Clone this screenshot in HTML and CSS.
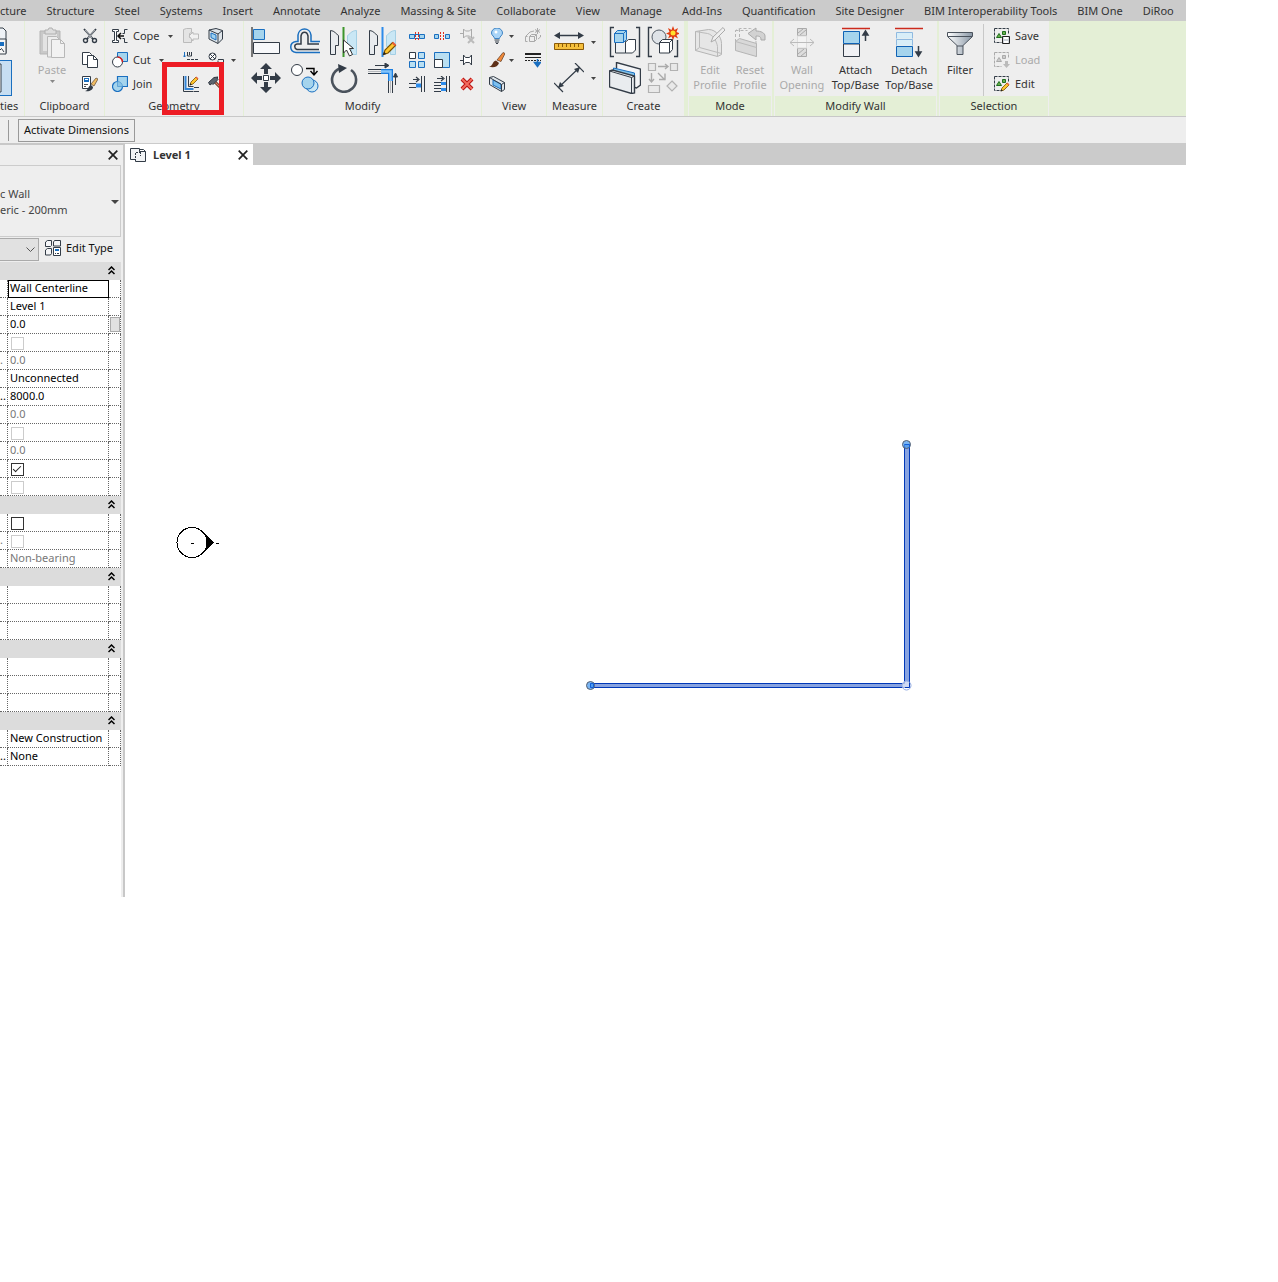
FILE: index.html
```html
<!DOCTYPE html>
<html lang="en">
<head>
    <meta charset="UTF-8">
    <meta name="viewport" content="width=device-width, initial-scale=1.0">
    <title>Level 1 - Modify Walls</title>
    <link rel="stylesheet" href="styles.css">
</head>
<body>
    <!-- Shared glyphs -->
    <svg class="defs" width="0" height="0">
        <symbol id="arrow" viewBox="0 0 5 3"><path d="M0 0h5L2.500 3z" fill="#444"/></symbol>
        <symbol id="collapse" viewBox="0 0 7 9"><path d="M.5 4l3-3 3 3M.5 8l3-3 3 3" fill="none" stroke="#000" stroke-width="1.500"/></symbol>
        <symbol id="close" viewBox="0 0 10 10"><path d="M.7.7l8.600 8.600M9.300.7L.7 9.300" stroke="#222" stroke-width="1.700"/></symbol>
        <symbol id="pencil" viewBox="0 0 10 10"><path d="M1 9l1-3 5-5 2 2-5 5z" fill="#ffc52e" stroke="#7a5200" stroke-width=".8"/><path d="M6.500 1.500L7.500.5l2 2-1 1z" fill="#e8603c"/><path d="M.6 9.400l.8-2.200 1.400 1.400z" fill="#222"/></symbol>
        <symbol id="picked" viewBox="0 0 16 16"><path d="M.5.5h14v5M.5.5v14h7" fill="none" stroke="#333c47" stroke-dasharray="3 1"/><path d="M2.500 9.500l2.500-4 2.500 4z" fill="#6ab04c" stroke="#1f6f1f"/><path d="M8.500 3.500h3v3h-3z" fill="#6ab04c" stroke="#1f6f1f"/></symbol>
    </svg>

    <div class="app">
        <nav class="tabs">
            <a href="#">cture</a>
            <a href="#">Structure</a>
            <a href="#">Steel</a>
            <a href="#">Systems</a>
            <a href="#">Insert</a>
            <a href="#">Annotate</a>
            <a href="#">Analyze</a>
            <a href="#">Massing &amp; Site</a>
            <a href="#">Collaborate</a>
            <a href="#">View</a>
            <a href="#">Manage</a>
            <a href="#">Add-Ins</a>
            <a href="#">Quantification</a>
            <a href="#">Site Designer</a>
            <a href="#">BIM Interoperability Tools</a>
            <a href="#">BIM One</a>
            <a href="#">DiRoo</a>
        </nav>

        <div class="ribbon">
            <section class="panel panel-properties">
                <div class="panel-body col">
                    <button class="prop-btn" aria-label="Type properties"><svg width="8" height="30" viewBox="0 0 8 30"><path d="M-2 1h5l3 3v22" fill="#eef2f6" stroke="#333c47"/><path d="M-1 12h7v15h-7z" fill="#f7f7f7" stroke="#333c47"/><path d="M0 15h4v4H0z" fill="#1a6fc0"/><path d="M0 23l1.500-1.500L4 25" fill="none" stroke="#333c47"/></svg></button>
                    <button class="prop-btn selected" aria-label="Properties"><svg width="4" height="30" viewBox="0 0 4 30"><path d="M-2 1h3v28h-3" fill="#fff" stroke="#333c47"/></svg></button>
                </div>
                <h2>ties</h2>
            </section>

            <section class="panel panel-clipboard">
                <div class="panel-body">
                    <button class="big-btn" disabled>
                        <svg width="30" height="32" viewBox="0 0 30 32"><path d="M3 4h20v23H3z" fill="#c9c9c9" stroke="#b5b5b5"/><path d="M6 7h14v17H6z" fill="#e3e3e3"/><path d="M8 3h3l1-2h3l1 2h3v4H8z" fill="#ddd" stroke="#b0b0b0"/><path d="M10.500 9.500h9l4 4V30h-13z" fill="#ededed" stroke="#b8b8b8"/><path d="M14.500 12.500h9l4 4V30.500h-13z" fill="#f2f2f2" stroke="#b8b8b8"/><path d="M23.500 12.500v4h4" fill="none" stroke="#b8b8b8"/></svg>
                        <span>Paste</span>
                        <svg class="drop" width="5" height="3"><use href="#arrow"/></svg>
                    </button>
                    <div class="col">
                        <button class="icon-btn" aria-label="Cut to clipboard"><svg width="16" height="16" viewBox="0 0 16 16"><path d="M2 1l9 10M14 1L5 11" stroke="#333c47" stroke-width="1.800"/><path d="M3 2l7 8M13 2l-7 8" stroke="#fff" stroke-width=".6"/><circle cx="3.500" cy="12.500" r="2" fill="none" stroke="#333c47" stroke-width="1.400"/><circle cx="12.500" cy="12.500" r="2" fill="none" stroke="#333c47" stroke-width="1.400"/></svg></button>
                        <button class="icon-btn" aria-label="Copy to clipboard"><svg width="16" height="16" viewBox="0 0 16 16"><path d="M.5 12.500V.5h7l2 2v10z" fill="#fff" stroke="#333c47"/><path d="M5.500 15.500v-12h6l4 4v8z" fill="#fff" stroke="#333c47"/><path d="M11.500 3.500v4h4" fill="none" stroke="#333c47"/></svg></button>
                        <button class="icon-btn" aria-label="Match type"><svg width="16" height="16" viewBox="0 0 16 16"><path d="M.5.5h8v12h-8z" fill="#fff" stroke="#333c47"/><path d="M2 2h5v4H2z" fill="#1a6fc0"/><path d="M3 3h3v1H3z" fill="#fff"/><path d="M2 8.500h4M2 10.500h2" stroke="#555"/><path d="M9 8l5-6 2 1-4 7z" fill="#f2bd63" stroke="#5a4630" stroke-width=".7"/><path d="M3 15c3 0 3-5 6-6l2 2c0 3-4 5-8 4z" fill="#333c47"/></svg></button>
                    </div>
                </div>
                <h2>Clipboard</h2>
            </section>

            <section class="panel panel-geometry">
                <div class="panel-body">
                    <div class="col labelled">
                        <button class="text-btn"><svg width="16" height="16" viewBox="0 0 16 16"><path d="M.5 1.500h6v2h-2v9h2v2h-6v-2h2v-9h-2z" fill="#fff" stroke="#333c47"/><path d="M15.500 1.500h-3v4h-2M15.500 14.500h-3v-4h-2" fill="none" stroke="#333c47"/><path d="M6 8h6M9 5L6 8l3 3" fill="none" stroke="#111" stroke-width="1.500"/></svg><span>Cope</span><svg class="more" width="5" height="3"><use href="#arrow"/></svg></button>
                        <button class="text-btn"><svg width="16" height="16" viewBox="0 0 16 16"><path d="M5.500.5h10v9h-10z" fill="#a5d4ed" stroke="#1a6fc0"/><circle cx="5.500" cy="10" r="5" fill="#fff" stroke="#333c47"/><path d="M5.500 5a5 5 0 0 1 5 5" fill="none" stroke="#d91f1f" stroke-width="1.500"/></svg><span>Cut</span><svg class="more" width="5" height="3"><use href="#arrow"/></svg></button>
                        <button class="text-btn"><svg width="16" height="16" viewBox="0 0 16 16"><path d="M5.500 5.500V.5h10v10h-5A5 5 0 1 1 5.500 5.500z" fill="#a5d4ed" stroke="#1a6fc0" stroke-width="1.200"/><path d="M5.500 5.500a5 5 0 0 1 5 5h-5z" fill="#8bc4e6" stroke="#4a95d0" stroke-width=".7"/></svg><span>Join</span></button>
                    </div>
                    <div class="col">
                        <button class="icon-btn" aria-label="Join roofs" disabled><svg width="16" height="16" viewBox="0 0 16 16"><path d="M.5 1.500l3-1h5v4l-2 1v4h2v5h-8z" fill="#e4e4e4" stroke="#bbb"/><path d="M6 8l4-4v2h5.500v5H10v2z" fill="#f1f1f1" stroke="#bbb"/></svg></button>
                        <button class="icon-btn" aria-label="Beam joins"><svg width="16" height="16" viewBox="0 0 16 16"><path d="M1.500 0v5M0 3.500L1.500 5 3 3.500" stroke="#1a6fc0" fill="none"/><path d="M4.500 0v4h4v-4M6.500 0v3" stroke="#333c47" fill="none"/><path d="M4 7.500h12M4 10.500h12" stroke="#333c47" stroke-dasharray="3 1"/></svg></button>
                        <button class="icon-btn" aria-label="Wall joins"><svg width="16" height="16" viewBox="0 0 16 16"><path d="M.5 0v15.500h10" stroke="#333c47" fill="none"/><path d="M2.500 0v13h8" stroke="#3284d6" stroke-width="2" fill="none"/><path d="M5.500 0v10.500h5M11 11.500h5M11 15.500h5" stroke="#333c47" fill="none"/><use href="#pencil" x="6" y="0" width="10" height="10"/></svg></button>
                    </div>
                    <div class="col tools">
                        <button class="icon-btn" aria-label="Split face"><svg width="16" height="16" viewBox="0 0 16 16"><path d="M1 2l7-1.500 6.500 2V11L10 15.500 1 11z" fill="#dfe5ea" stroke="#333c47"/><path d="M10 15.500V6L1 2M10 6l4.500-3.500" fill="none" stroke="#333c47"/><path d="M3 5l5 2v5L3 9.500z" fill="#9fd2f0" stroke="#1a6fc0"/></svg></button>
                        <button class="icon-btn wide" aria-label="Paint"><svg width="16" height="16" viewBox="0 0 16 16"><circle cx="4.500" cy="4.500" r="3.500" fill="#fff" stroke="#333c47"/><path d="M2 2l5 5M7 2L2 7" stroke="#333c47"/><path d="M2 11.500h13.500v-4H10M2 14.500h8v-6" fill="none" stroke="#333c47"/></svg><svg width="5" height="3"><use href="#arrow"/></svg></button>
                        <button class="icon-btn" aria-label="Demolish"><svg width="16" height="16" viewBox="0 0 16 16"><path d="M7 6l8 8" stroke="#5a2a1c" stroke-width="3"/><path d="M7 6l8 8" stroke="#d0856a" stroke-width="1.200"/><path d="M.5 6.500L6 1.500l4-.5-1 1 1 1.500L5 8.500 4 7.500 2 9z" fill="#5b646e" stroke="#2e3640"/></svg></button>
                    </div>
                </div>
                <h2>Geometry</h2>
            </section>

            <section class="panel panel-modify">
                <div class="panel-body">
                    <div class="large-grid">
                        <button aria-label="Align"><svg width="30" height="30" viewBox="0 0 30 30"><path d="M1 0v30" stroke="#000"/><path d="M2.500 2.500h11v10h-11z" fill="#a5d4ed" stroke="#1a6fc0"/><path d="M2.500 15.500h26v11h-26z" fill="#f7f8fa" stroke="#333c47"/></svg></button>
                        <button aria-label="Offset"><svg width="30" height="30" viewBox="0 0 30 30"><g fill="none"><path d="M30 25.500H6c-7-1-7-10 0-11h2V8c1-8 12-8 13 0v6.500h9" stroke="#1a6fc0" stroke-width="1.500"/><path d="M29 22.500H7c-3-1-3-5 0-5.500h4V9c1-5 6-5 7 0v8h11" stroke="#333c47" stroke-width="1.500"/></g></svg></button>
                        <button aria-label="Mirror - pick axis"><svg width="30" height="30" viewBox="0 0 30 30"><path d="M1.500 3.500c4 0 6 4 8 5v10h-3v9h-5z" fill="#e8ebee" stroke="#333c47"/><path d="M27.500 3.500c-5 0-7 4-9 5v11h4v8h5z" fill="#c9e7f5" stroke="#a3cfe4"/><path d="M14.500 0v30" stroke="#3d962b" stroke-width="2"/><path d="M14.500 13v13l3-3 3 6 3-1.500-3-6h4z" fill="#fff" stroke="#333"/></svg></button>
                        <button aria-label="Mirror - draw axis"><svg width="30" height="30" viewBox="0 0 30 30"><path d="M1.500 3.500c4 0 6 4 8 5v10h-3v9h-5z" fill="#e8ebee" stroke="#333c47"/><path d="M27.500 3.500c-5 0-7 4-9 5v11h4v8h5z" fill="#c9e7f5" stroke="#a3cfe4"/><path d="M14.500 0v30" stroke="#2c8bea" stroke-width="2"/><use href="#pencil" x="14" y="14" width="15" height="15"/></svg></button>
                        <button aria-label="Move"><svg width="30" height="30" viewBox="0 0 30 30"><path d="M15 0l6 6h-4v5h-4V6H9zM15 30l6-6h-4v-5h-4v5H9zM0 15l6-6v4h5v4H6v4zM30 15l-6-6v4h-5v4h5v4z" fill="#333c47"/><path d="M12.500 12.500h5v5h-5z" fill="#fff" stroke="#333c47"/></svg></button>
                        <button aria-label="Copy"><svg width="30" height="30" viewBox="0 0 30 30"><circle cx="7" cy="7" r="5.500" fill="#fff" stroke="#333c47"/><path d="M16 5.500h8V11M20.500 8l3.500 4 3.500-4" fill="none" stroke="#000" stroke-width="1.400"/><circle cx="22" cy="23" r="6" fill="#c9e7f5" stroke="#1a6fc0"/><circle cx="18" cy="20" r="6" fill="#a5d4ed" stroke="#1a6fc0"/></svg></button>
                        <button aria-label="Rotate"><svg width="30" height="30" viewBox="0 0 30 30"><path d="M11 5.500A12 12 0 1 0 22 7" fill="none" stroke="#4a525c" stroke-width="2.600"/><path d="M9 1l9 4-8 5z" fill="#333c47"/></svg></button>
                        <button aria-label="Trim to corner"><svg width="30" height="30" viewBox="0 0 30 30"><path d="M7 2.500h12M17 0l4 2.500L17 5z" fill="#333c47" stroke="#333c47"/><path d="M0 6.500h14M0 10.500h14M20.500 17v13M24.500 17v13" stroke="#333c47"/><path d="M0 8.500h14M22.500 17v13" stroke="#b5b8bc"/><path d="M13 8.500h9.500V18" fill="none" stroke="#1a7de0" stroke-width="5"/><path d="M13 8.500h9.500V18" fill="none" stroke="#83c3fa" stroke-width="2.500"/><path d="M27.500 22V13M25.500 14l2-4 2 4z" fill="#333c47" stroke="#333c47"/></svg></button>
                    </div>
                    <div class="small-grid">
                        <button class="icon-btn" aria-label="Split element"><svg width="16" height="16" viewBox="0 0 16 16"><path d="M.5 6.500h5v4h-5zM10.500 6.500h5v4h-5z" fill="#a5d4ed" stroke="#1a6fc0"/><path d="M6 6.500h4M6 10.500h4" stroke="#1a6fc0"/><path d="M6.500 4v9M9.500 4v9" stroke="#e03020" stroke-dasharray="2 1"/></svg></button>
                        <button class="icon-btn" aria-label="Split with gap"><svg width="16" height="16" viewBox="0 0 16 16"><path d="M.5 6.500h4v4h-4zM11.500 6.500h4v4h-4z" fill="#a5d4ed" stroke="#1a6fc0"/><path d="M6.500 4v9M9.500 4v9" stroke="#e03020" stroke-dasharray="2 1"/></svg></button>
                        <button class="icon-btn" aria-label="Unpin" disabled><svg width="16" height="16" viewBox="0 0 16 16"><path d="M1 5.500h4M4.500 1v9l2-2h4l2 2V1l-2 2h-4z" fill="none" stroke="#aaa"/><path d="M9 9l6 6M15 9l-6 6" stroke="#bbb" stroke-width="2"/></svg></button>
                        <button class="icon-btn" aria-label="Array"><svg width="16" height="16" viewBox="0 0 16 16"><path d="M.5.5h6v6h-6z" fill="#fff" stroke="#333c47"/><path d="M9.500.5h6v6h-6zM.5 9.500h6v6h-6zM9.500 9.500h6v6h-6z" fill="#b9dff2" stroke="#1a6fc0"/></svg></button>
                        <button class="icon-btn" aria-label="Scale"><svg width="16" height="16" viewBox="0 0 16 16"><path d="M.5.5h15v15h-15z" fill="#b9dff2" stroke="#1a6fc0"/><path d="M.5 7.500h8v8h-8z" fill="#fff" stroke="#333c47"/></svg></button>
                        <button class="icon-btn" aria-label="Pin"><svg width="16" height="16" viewBox="0 0 16 16"><path d="M1 8.500h4M4.500 3v10l2-2.500h4l2 2.500V3l-2 2.500h-4z" fill="#fff" stroke="#333c47"/></svg></button>
                        <button class="icon-btn" aria-label="Trim single element"><svg width="16" height="16" viewBox="0 0 16 16"><path d="M4 3.500h5M7 1l3 2.500L7 6" fill="none" stroke="#333c47" stroke-width="1.200"/><path d="M0 7.500h7M0 11.500h7M12.500 0v16M15.500 0v16" stroke="#333c47"/><path d="M7 9.500h5" stroke="#2c8bea" stroke-width="4"/></svg></button>
                        <button class="icon-btn" aria-label="Trim multiple elements"><svg width="16" height="16" viewBox="0 0 16 16"><path d="M3 2.500h6M7 0l3 2.500L7 5" fill="none" stroke="#333c47" stroke-width="1.200"/><path d="M0 6.500h7M0 9.500h7M0 12.500h7M0 15.500h7M12.500 0v16M15.500 0v16" stroke="#333c47"/><path d="M7 7.500h5M7 13.500h5" stroke="#2c8bea" stroke-width="3"/></svg></button>
                        <button class="icon-btn" aria-label="Delete"><svg width="16" height="16" viewBox="0 0 16 16"><path d="M3 3l10 10M13 3L3 13" stroke="#b81010" stroke-width="4"/><path d="M3 3l10 10M13 3L3 13" stroke="#f36b5e" stroke-width="2"/></svg></button>
                    </div>
                </div>
                <h2>Modify</h2>
            </section>

            <section class="panel panel-view">
                <div class="panel-body">
                    <div class="col tools">
                        <button class="icon-btn wide" aria-label="Hide in view"><svg width="16" height="16" viewBox="0 0 16 16"><path d="M5.500 10.500c0-2-3-3-3-5.500a5.500 5 0 0 1 11 0c0 2.500-3 3.500-3 5.500z" fill="#a9d4f7" stroke="#3d83c4"/><path d="M5.500 12h5M6 14h4M7 15.500h2" stroke="#333c47" stroke-width="1.200"/><circle cx="7" cy="4" r="1.500" fill="#fff"/></svg><svg width="5" height="3"><use href="#arrow"/></svg></button>
                        <button class="icon-btn wide" aria-label="Override graphics"><svg width="16" height="16" viewBox="0 0 16 16"><path d="M8 8l6-7.500 2 1-4 8z" fill="#f0893a" stroke="#5a3620" stroke-width=".7"/><path d="M0 14.500c4 0 3-5 7-6l3 2.500c-1 4-6 5-10 3.500z" fill="#5d3018"/></svg><svg width="5" height="3"><use href="#arrow"/></svg></button>
                        <button class="icon-btn" aria-label="Selection box"><svg width="16" height="16" viewBox="0 0 16 16"><path d="M.5 1.500l4-1 11 6v7l-3 2-12-7z" fill="#dfe5ea" stroke="#333c47"/><path d="M4 4l8 4v5L4 9z" fill="#7dc0ef" stroke="#1a6fc0"/><path d="M.5 1.500l12 7 3-2M12.500 8.500v7" fill="none" stroke="#333c47"/></svg></button>
                    </div>
                    <div class="col">
                        <button class="icon-btn" aria-label="Displace elements" disabled><svg width="16" height="16" viewBox="0 0 16 16"><path d="M4.500 8.500l2-2h5v5l-2 2h-5zM4.500 8.500h5v5M9.500 8.500l2-2M2.500 13.500h-2v-5h2M1 8l4-4 4-1M13 11l2.500-2V7" fill="none" stroke="#aaa"/><path d="M12.500 0v6M10 1.500l5 3M15 1.500l-5 3" stroke="#aaa"/></svg></button>
                        <button class="icon-btn" aria-label="Linework"><svg width="16" height="16" viewBox="0 0 16 16"><path d="M0 2h16" stroke="#222" stroke-width="2"/><path d="M0 5.500h16" stroke="#222"/><path d="M0 8.500h16" stroke="#222" stroke-dasharray="2 1"/><path d="M12.500 7v6M9.500 10.500l3 4 3-4z" fill="#1a6fc0" stroke="#1a6fc0" stroke-width="1.500"/></svg></button>
                    </div>
                </div>
                <h2>View</h2>
            </section>

            <section class="panel panel-measure">
                <div class="panel-body col">
                    <button class="measure-btn" aria-label="Measure between references"><svg width="30" height="30" viewBox="0 0 30 30"><path d="M4 8.500h22" stroke="#333c47" stroke-width="1.500"/><path d="M0 8.500L6 5v7zM30 8.500L24 5v7z" fill="#333c47"/><path d="M.5 16.500h29v6H.5z" fill="#f5bf3c" stroke="#8a5a08"/><path d="M4.500 17v3m4-3v3m4-3v3m4-3v3m4-3v3m4-3v3" stroke="#8a5a08"/></svg><svg width="5" height="3"><use href="#arrow"/></svg></button>
                    <button class="measure-btn" aria-label="Aligned dimension"><svg width="30" height="30" viewBox="0 0 30 30"><path d="M4 25L26 4M0 20l9 9M21 0l9 9" stroke="#333c47" stroke-width="1.200"/><path d="M4 25l2-6 4 4zM26 4l-2 6-4-4z" fill="#333c47"/></svg><svg width="5" height="3"><use href="#arrow"/></svg></button>
                </div>
                <h2>Measure</h2>
            </section>

            <section class="panel panel-create">
                <div class="panel-body">
                    <div class="large-grid two">
                        <button aria-label="Create assembly"><svg width="32" height="32" viewBox="0 0 32 32"><path d="M5 1.500H1.500v29H5M27 1.500h3.500v29H27" fill="none" stroke="#333c47" stroke-width="1.400"/><path d="M16.500 16l3-2.500h7V24l-3 3h-7z" fill="#fff" stroke="#333c47"/><path d="M6.500 15.500h10V27h-10z" fill="#eef0f2" stroke="#333c47"/><path d="M5.500 7.500l3-3h9v9l-3 3h-9z" fill="#a5d4ed" stroke="#1a6fc0"/><path d="M5.500 7.500h9v9M14.500 7.500l3-3" fill="none" stroke="#1a6fc0"/></svg></button>
                        <button aria-label="Create group"><svg width="32" height="32" viewBox="0 0 32 32"><path d="M5 1.500H1.500v29H5M27 30.500h3.500V14" fill="none" stroke="#333c47" stroke-width="1.400"/><circle cx="12" cy="11" r="7" fill="#dfe3e8" stroke="#555e69"/><path d="M12.500 16.500l3-3h10v10l-3 3.500h-10z" fill="#fff" stroke="#333c47"/><path d="M12.500 16.500h10V27M22.500 16.500l3-3" fill="none" stroke="#333c47"/><path d="M26 0l1.500 4L31 2l-1.500 4L33 7.500 29.500 9l1.500 3.500-3.500-2L26 14l-1.500-3.500-3.500 2L22.500 9 19 7.500 22.500 6 21 2l3.500 2z" fill="#e23c10"/><circle cx="26" cy="7" r="2.500" fill="#ffe12d"/></svg></button>
                        <button aria-label="Create parts"><svg width="32" height="32" viewBox="0 0 32 32"><path d="M7.500.5L31.500 7v16l-4 3L7.500 20z" fill="#f4f5f7" stroke="#333c47" stroke-width="1.400"/><path d="M4.500 6l21 5v17l-21-6z" fill="#83c3ea" stroke="#1a6fc0"/><path d="M.5 9l3-1 22 6v17l-3 .5-22-6.500z" fill="#e9ecef" stroke="#333c47" stroke-width="1.400"/><path d="M.5 9l22 6.500v16M22.500 15.500l3-1.500" fill="none" stroke="#333c47"/></svg></button>
                        <button aria-label="Create similar" disabled><svg width="32" height="32" viewBox="0 0 32 32"><path d="M1.500 1.500h7v7h-7zM23.500 1.500h7v7h-7zM1.500 23.500h11v7h-11zM25 19l5 5-5 5-5-5z" fill="#e9e9e9" stroke="#b2b2b2" stroke-width="1.200"/><path d="M11 4.500h10M18 2l3 2.500L18 7M4.500 11v9M2 17l2.500 3L7 17M11 11l7 7M12 17.500h6v-6" fill="none" stroke="#aaa" stroke-width="1.400"/></svg></button>
                    </div>
                </div>
                <h2>Create</h2>
            </section>

            <div class="contextual">
                <section class="panel panel-mode">
                    <div class="panel-body">
                        <button class="big-btn" disabled>
                            <svg width="30" height="32" viewBox="0 0 30 32"><path d="M.5 4.500l13-2c8 0 13 8 13 14v11l-4 2-22-6z" fill="#e6e6e6" stroke="#b5b5b5"/><path d="M.5 4.500l12 2c5 1 9 7 10 13v10M.5 23.500l4-3 22 6M4.500 4v16" fill="none" stroke="#bbb"/><path d="M16 15l2-5L28 .5 30 3 20 13z" fill="#eee" stroke="#aaa"/></svg>
                            <span>Edit</span><span>Profile</span>
                        </button>
                        <button class="big-btn" disabled>
                            <svg width="32" height="32" viewBox="0 0 32 32"><path d="M1.500 15V3.500l4-2h11l4 2M1.500 3.500h12M5.500 2v11M22 14v16" fill="none" stroke="#b5b5b5" stroke-dasharray="3 2"/><path d="M1.500 14.500l4-3 17 5v13l-21-6z" fill="#d9d9d9" stroke="#b5b5b5"/><path d="M1.500 14.500l21 6" stroke="#bbb"/><path d="M14 6.500L22 1v3c5 0 9 2 9 5v4h-4c0-3-1-4-5-4v4z" fill="#d2d2d2" stroke="#aaa"/></svg>
                            <span>Reset</span><span>Profile</span>
                        </button>
                    </div>
                    <h2>Mode</h2>
                </section>

                <section class="panel panel-wall">
                    <div class="panel-body">
                        <button class="big-btn" disabled>
                            <svg width="26" height="32" viewBox="0 0 26 32"><path d="M8.500 1.500h9v7h-9zM8.500 21.500h9v8h-9z" fill="#ddd" stroke="#aaa"/><path d="M9 6l5-4M11 8l6-5M9 27l6-5M12 29l5-4" stroke="#aaa"/><path d="M8.500 9v12h9V9z" fill="#f3f3f3" stroke="#ddd"/><path d="M1 15.500h24M5 12l-4 3.500L5 19M21 12l4 3.500-4 3.500" fill="none" stroke="#bbb"/></svg>
                            <span>Wall</span><span>Opening</span>
                        </button>
                        <button class="big-btn">
                            <svg width="28" height="32" viewBox="0 0 28 32"><path d="M0 1.500h28" stroke="#cc2a1c" stroke-width="1.500"/><path d="M1.500 17v12.500h16V17z" fill="#f0f1f4" stroke="#333c47"/><path d="M1.500 4.500h16v12h-16z" fill="#a5d4ed" stroke="#0f62b5"/><path d="M23.500 14V6M21 8l2.500-4L26 8z" stroke="#333c47" stroke-width="1.500" fill="#333c47"/></svg>
                            <span>Attach</span><span>Top/Base</span>
                        </button>
                        <button class="big-btn">
                            <svg width="28" height="32" viewBox="0 0 28 32"><path d="M0 1.500h28" stroke="#cc2a1c" stroke-width="1.500"/><path d="M1.500 11.500v-6h16v6M1.500 18.500v-6h16v6" fill="#d8eef8" stroke="#8fb9e0"/><path d="M1.500 19.500h16v10h-16z" fill="#a5d4ed" stroke="#0f62b5"/><path d="M23.500 19v8M21 25l2.500 4 2.500-4z" stroke="#333c47" stroke-width="1.500" fill="#333c47"/></svg>
                            <span>Detach</span><span>Top/Base</span>
                        </button>
                    </div>
                    <h2>Modify Wall</h2>
                </section>

                <section class="panel panel-selection">
                    <div class="panel-body">
                        <button class="big-btn">
                            <svg width="28" height="32" viewBox="0 0 28 32"><defs><linearGradient id="metal"><stop stop-color="#fff"/><stop offset="1" stop-color="#8896a5"/></linearGradient></defs><path d="M1.500 5.500h25v4L17 18.500v9h-6v-9l-9.500-9z" fill="url(#metal)" stroke="#4a525c"/><path d="M2 9.500h24M11 19h6" stroke="#4a525c"/></svg>
                            <span>Filter</span>
                        </button>
                        <div class="col saved">
                            <button class="text-btn"><svg width="16" height="16" viewBox="0 0 16 16"><use href="#picked"/><path d="M8.500 8.500h7v7h-7z" fill="#cfd4da" stroke="#222"/><path d="M10 13h4v2h-4zM10 9h4v2h-4z" fill="#fff"/></svg><span>Save</span></button>
                            <button class="text-btn" disabled><svg width="16" height="16" viewBox="0 0 16 16"><path d="M.5.5h14v5M.5.5v14h7" fill="none" stroke="#aaa" stroke-dasharray="3 1"/><path d="M2.500 9.500l2.500-4 2.500 4zM8.500 3.500h3v3h-3z" fill="#ccc" stroke="#aaa"/><path d="M11 9h3v3h2l-3.500 4L9 12h2z" fill="#bbb"/></svg><span>Load</span></button>
                            <button class="text-btn"><svg width="16" height="16" viewBox="0 0 16 16"><use href="#picked"/><use href="#pencil" x="6" y="6" width="10" height="10"/></svg><span>Edit</span></button>
                        </div>
                    </div>
                    <h2>Selection</h2>
                </section>
            </div>

            <div class="callout"></div>
        </div>

        <div class="options-bar">
            <button>Activate Dimensions</button>
        </div>

        <div class="workspace">
            <aside class="properties">
                <div class="palette-title">
                    <button aria-label="Close properties"><svg width="10" height="10"><use href="#close"/></svg></button>
                </div>
                <div class="type-selector">
                    <div>
                        <div>c Wall</div>
                        <div>eric - 200mm</div>
                    </div>
                    <button aria-label="Choose type"><svg width="8" height="4" viewBox="0 0 5 3" preserveAspectRatio="none"><path d="M0 0h5L2.500 3z" fill="#444"/></svg></button>
                </div>
                <div class="type-row">
                    <div class="combo">
                        <select aria-label="Selected elements"><option></option></select>
                        <svg width="9" height="6" viewBox="0 0 9 6"><path d="M.5.5l4 4 4-4" fill="none" stroke="#555"/></svg>
                    </div>
                    <button class="edit-type"><svg width="16" height="16" viewBox="0 0 16 16"><path d="M.5 2l2-1.500h4v5l-1 1h-5zM8.500 2l1-1.500h6V6h-7zM.5 10l2-1.500h4v5l-1 1.500h-5z" fill="#f5f6f8" stroke="#333c47"/><path d="M8.500 7.500h7v8h-7z" fill="#fff" stroke="#333c47"/><path d="M10 9h4v2h-4z" fill="#1a6fc0"/><path d="M10 13.500h1m1 0h2" stroke="#333c47"/></svg><span>Edit Type</span></button>
                </div>
                <table class="props">
                    <colgroup><col class="name"><col><col class="assoc"></colgroup>
                    <tbody>
                        <tr class="group"><th colspan="3"><svg width="7" height="9"><use href="#collapse"/></svg></th></tr>
                        <tr><td></td><td class="active">Wall Centerline</td><td></td></tr>
                        <tr><td></td><td>Level 1</td><td></td></tr>
                        <tr><td></td><td>0.0</td><td><button class="assoc-btn" aria-label="Associate parameter"></button></td></tr>
                        <tr><td></td><td><input type="checkbox" aria-label="Base is attached" disabled></td><td></td></tr>
                        <tr class="off"><td>.</td><td>0.0</td><td></td></tr>
                        <tr><td></td><td>Unconnected</td><td></td></tr>
                        <tr><td>..</td><td>8000.0</td><td></td></tr>
                        <tr class="off"><td></td><td>0.0</td><td></td></tr>
                        <tr><td></td><td><input type="checkbox" aria-label="Top is attached" disabled></td><td></td></tr>
                        <tr class="off"><td></td><td>0.0</td><td></td></tr>
                        <tr><td></td><td><input type="checkbox" aria-label="Room bounding" checked></td><td></td></tr>
                        <tr><td></td><td><input type="checkbox" aria-label="Related to mass" disabled></td><td></td></tr>
                    </tbody>
                    <tbody>
                        <tr class="group"><th colspan="3"><svg width="7" height="9"><use href="#collapse"/></svg></th></tr>
                        <tr><td></td><td><input type="checkbox" aria-label="Structural"></td><td></td></tr>
                        <tr class="off"><td>.</td><td><input type="checkbox" aria-label="Enable analytical model" disabled></td><td></td></tr>
                        <tr class="off"><td></td><td>Non-bearing</td><td></td></tr>
                    </tbody>
                    <tbody>
                        <tr class="group"><th colspan="3"><svg width="7" height="9"><use href="#collapse"/></svg></th></tr>
                        <tr><td></td><td></td><td></td></tr>
                        <tr><td></td><td></td><td></td></tr>
                        <tr><td></td><td></td><td></td></tr>
                    </tbody>
                    <tbody>
                        <tr class="group"><th colspan="3"><svg width="7" height="9"><use href="#collapse"/></svg></th></tr>
                        <tr><td></td><td></td><td></td></tr>
                        <tr><td></td><td></td><td></td></tr>
                        <tr><td></td><td></td><td></td></tr>
                    </tbody>
                    <tbody>
                        <tr class="group"><th colspan="3"><svg width="7" height="9"><use href="#collapse"/></svg></th></tr>
                        <tr><td></td><td>New Construction</td><td></td></tr>
                        <tr><td>..</td><td>None</td><td></td></tr>
                    </tbody>
                </table>
            </aside>

            <main class="view">
                <div class="view-tabs">
                    <div class="view-tab">
                        <svg width="16" height="14" viewBox="0 0 16 14"><path d="M.5 11.500V.5h9v3h6v10h-10v-2z" fill="#f1f3f5" stroke="#333c47"/><path d="M9.500 3.500V1.500h4l2 2" fill="none" stroke="#333c47"/><path d="M5.500 13V4M6 4.500h4M10.500 4v4" fill="none" stroke="#333c47" stroke-dasharray="2 1"/></svg>
                        <span>Level 1</span>
                        <button aria-label="Close view"><svg width="10" height="10"><use href="#close"/></svg></button>
                    </div>
                </div>
                <svg class="drawing">
                    <!-- Elevation marker -->
                    <g shape-rendering="crispEdges">
                        <circle cx="67" cy="377.500" r="15" fill="none" stroke="#000"/>
                        <path d="M79 367l10 10.500-10 10.500c3-7 3-14 0-21z" fill="#000"/>
                        <path d="M66 378.500h3M91 378.500h3" stroke="#000"/>
                    </g>
                    <!-- Walls -->
                    <path d="M465.500 518.500h314v-239h5v243h-319z" fill="#88a3e0" stroke="#0038b8"/>
                    <circle cx="465.500" cy="520.500" r="4" fill="#4c9cf0" fill-opacity=".75" stroke="#555f6e"/>
                    <path d="M465.500 518.500h3v4h-3z" fill="#4c9cf0" stroke="#1460d8"/>
                    <circle cx="781.500" cy="279.500" r="4" fill="#4c9cf0" fill-opacity=".75" stroke="#555f6e"/>
                    <path d="M779.500 279.500h5v3" fill="none" stroke="#1460d8"/>
                    <circle cx="781.500" cy="520.500" r="4.500" fill="#fff" fill-opacity=".6" stroke="#8fa9e2"/>
                    <path d="M780 522.500h4.500v-5" fill="none" stroke="#0038b8"/>
                </svg>
            </main>
        </div>
    </div>
</body>
</html>
```
FILE: styles.css
```css
body {
    margin: 0;
    background: white;
    font-family: "Noto Sans", "Open Sans", sans-serif;
    font-size: 11px;
    line-height: 16px;
    color: #333;
}
button {
    padding: 0;
    border: none;
    background: none;
    font: inherit;
    color: inherit;
    cursor: pointer;
}
button:disabled {
    color: #aaa;
    cursor: default;
}
svg {
    flex: none;
    display: block;
}
.defs {
    position: absolute;
}
.app {
    display: flex;
    flex-direction: column;
    height: 70vh;
    min-height: 800px;
    margin-right: 92px;
    overflow: hidden;
}
.col {
    display: flex;
    flex-direction: column;
}

/* Ribbon tabs */
.tabs {
    display: flex;
    gap: 20px;
    height: 21px;
    background: #cbcbcb;
    overflow: hidden;
}
.tabs a {
    flex: none;
    line-height: 22px;
    color: #333;
    text-decoration: none;
}

/* Ribbon */
.ribbon {
    position: relative;
    display: flex;
    height: 95px;
    background: #eee;
    border-bottom: 1px solid #c8c8c8;
}
.panel {
    display: flex;
    flex-direction: column;
    flex: none;
    box-sizing: border-box;
    border-right: 1px solid #e4efd6;
}
.panel-body {
    display: flex;
    height: 72px;
    padding-top: 3px;
}
.panel h2 {
    margin: 0;
    font-size: 11px;
    font-weight: normal;
    line-height: 20px;
    text-align: center;
}
.panel-properties {
    width: 25px;
}
.panel-properties h2 {
    text-align: left;
}
.panel-clipboard {
    width: 80px;
}
.panel-geometry {
    width: 139px;
}
.panel-modify {
    width: 238px;
}
.panel-view {
    width: 65px;
}
.panel-measure {
    width: 56px;
}
.panel-create {
    width: 82px;
}
.contextual {
    display: flex;
    flex: 1;
    gap: 2px;
    padding-left: 3px;
    background: #e4efd6;
}
.contextual .panel {
    border-left: 1px solid #eee;
    border-right: 1px solid #eee;
}
.contextual .panel-body {
    justify-content: center;
    background: #eee;
}
.panel-mode {
    width: 84px;
}
.panel-wall {
    width: 163px;
}
.panel-selection {
    width: 110px;
}

/* Ribbon buttons */
.prop-btn {
    display: flex;
    align-items: center;
    width: 12px;
    height: 36px;
}
.prop-btn.selected {
    box-sizing: border-box;
    border: 1px solid #1a6fc0;
    border-left: none;
    background: #c7def2;
}
.big-btn {
    display: flex;
    flex-direction: column;
    align-items: center;
    box-sizing: border-box;
    width: 54px;
    height: 72px;
    padding-top: 3px;
    line-height: 15px;
}
.big-btn > svg:first-child {
    margin-bottom: 3px;
}
.big-btn .drop {
    margin-top: 3px;
    opacity: 0.6;
}
.panel-mode .big-btn,
.panel-selection .big-btn {
    width: 40px;
}
.icon-btn {
    display: flex;
    align-items: center;
    width: 24px;
    height: 24px;
    padding: 0 4px;
}
.panel-clipboard .icon-btn {
    padding: 0 3px;
}
.icon-btn.wide {
    width: 36px;
    gap: 4px;
}
.text-btn {
    display: flex;
    align-items: center;
    gap: 5px;
    height: 24px;
}
.text-btn .more {
    margin-left: 3px;
}
.labelled {
    width: 67px;
    padding-left: 7px;
}
.panel-geometry .tools {
    padding-left: 1px;
}
.panel-geometry .wide {
    gap: 7px;
}
.large-grid {
    display: grid;
    grid-template-columns: repeat(4, 39px);
    grid-auto-rows: 36px;
    padding-left: 2px;
}
.large-grid.two {
    grid-template-columns: repeat(2, 38px);
    padding-left: 3px;
}
.large-grid button {
    display: flex;
    align-items: center;
    justify-content: center;
}
.small-grid {
    display: grid;
    grid-template-columns: repeat(3, 25px);
    grid-auto-rows: 24px;
    padding-left: 3px;
}
.panel-view .panel-body {
    padding-left: 3px;
}
.measure-btn {
    display: flex;
    align-items: center;
    gap: 7px;
    height: 36px;
    padding-left: 7px;
}
.panel-selection .panel-body {
    justify-content: flex-start;
}
.saved {
    margin-left: 3px;
    padding-left: 10px;
    border-left: 1px solid #c8c8c8;
}
.callout {
    position: absolute;
    left: 162px;
    top: 41px;
    box-sizing: border-box;
    width: 62px;
    height: 53px;
    border: 5px solid #ed1c24;
    pointer-events: none;
}

/* Options bar */
.options-bar {
    display: flex;
    align-items: center;
    height: 26px;
    padding-left: 8px;
    background: #eee;
}
.options-bar::before {
    content: "";
    height: 21px;
    margin-right: 9px;
    border-left: 1px solid #999;
}
.options-bar button {
    height: 23px;
    padding: 0 5px;
    border: 1px solid #999;
    color: #111;
}

/* Properties palette */
.workspace {
    display: flex;
    flex: 1;
    min-height: 0;
}
.properties {
    width: 121px;
    flex: none;
    padding-right: 2px;
    border-top: 2px solid #c8c8c8;
    border-right: 2px solid #c8c8c8;
    background: linear-gradient(to right, transparent 121px, #eee 121px);
}
.palette-title {
    display: flex;
    align-items: center;
    justify-content: flex-end;
    height: 20px;
    padding-right: 3px;
    background: #eee;
}
.type-selector {
    display: flex;
    align-items: center;
    justify-content: space-between;
    height: 68px;
    padding: 2px 1px 0 0;
    border: 1px solid #ccc;
    border-left: none;
    background: #eee;
    color: #444;
}
.type-row {
    display: flex;
    align-items: flex-start;
    gap: 6px;
    height: 24px;
    padding-top: 1px;
    background: #eee;
    color: #111;
}
.combo {
    position: relative;
}
.combo select {
    display: block;
    appearance: none;
    box-sizing: border-box;
    width: 39px;
    height: 23px;
    border: 1px solid #aaa;
    border-left: none;
    border-radius: 0;
    background: #e1e1e1;
}
.combo svg {
    position: absolute;
    right: 4px;
    top: 9px;
    pointer-events: none;
}
.edit-type {
    display: flex;
    align-items: center;
    gap: 5px;
    height: 20px;
}
.props {
    width: 121px;
    table-layout: fixed;
    border-spacing: 0;
    color: #000;
}
.props .name {
    width: 8px;
}
.props .assoc {
    width: 12px;
}
.props td,
.props th {
    box-sizing: border-box;
    height: 18px;
    padding: 0;
    line-height: 15px;
    white-space: nowrap;
    vertical-align: top;
}
.props td {
    border-right: 1px dotted #666;
    border-bottom: 1px dotted #666;
}
.props td:nth-child(2) {
    padding-left: 2px;
}
.props .group th {
    padding: 4px 0 0 108px;
    background: #dcdcdc;
}
.props .off {
    color: #777;
}
.props .active {
    outline: 1px solid #000;
    outline-offset: -1px;
}
.props input {
    display: block;
    appearance: none;
    box-sizing: border-box;
    width: 13px;
    height: 13px;
    margin: 3px 0 0 1px;
    border: 1px solid #333;
    background: white;
}
.props input:disabled {
    border-color: #ccc;
}
.props input:checked::before {
    content: "";
    display: block;
    width: 7px;
    height: 3px;
    margin: 2px 1px;
    border-left: 1px solid #222;
    border-bottom: 1px solid #222;
    transform: rotate(-45deg);
}
.assoc-btn {
    display: block;
    box-sizing: border-box;
    width: 10px;
    height: 15px;
    margin: 1px 0 0 1px;
    border: 1px solid #aaa;
    background: #e1e1e1;
}

/* Drawing view */
.view {
    display: flex;
    flex-direction: column;
    flex: 1;
    min-width: 0;
}
.view-tabs {
    height: 22px;
    background: #cbcbcb;
}
.view-tab {
    display: flex;
    align-items: center;
    gap: 7px;
    box-sizing: border-box;
    width: 128px;
    height: 21px;
    margin-top: 1px;
    padding: 1px 5px 0;
    background: white;
    font-weight: bold;
}
.view-tab button {
    margin-left: auto;
}
.drawing {
    flex: 1;
    width: 100%;
    min-height: 0;
}
```
